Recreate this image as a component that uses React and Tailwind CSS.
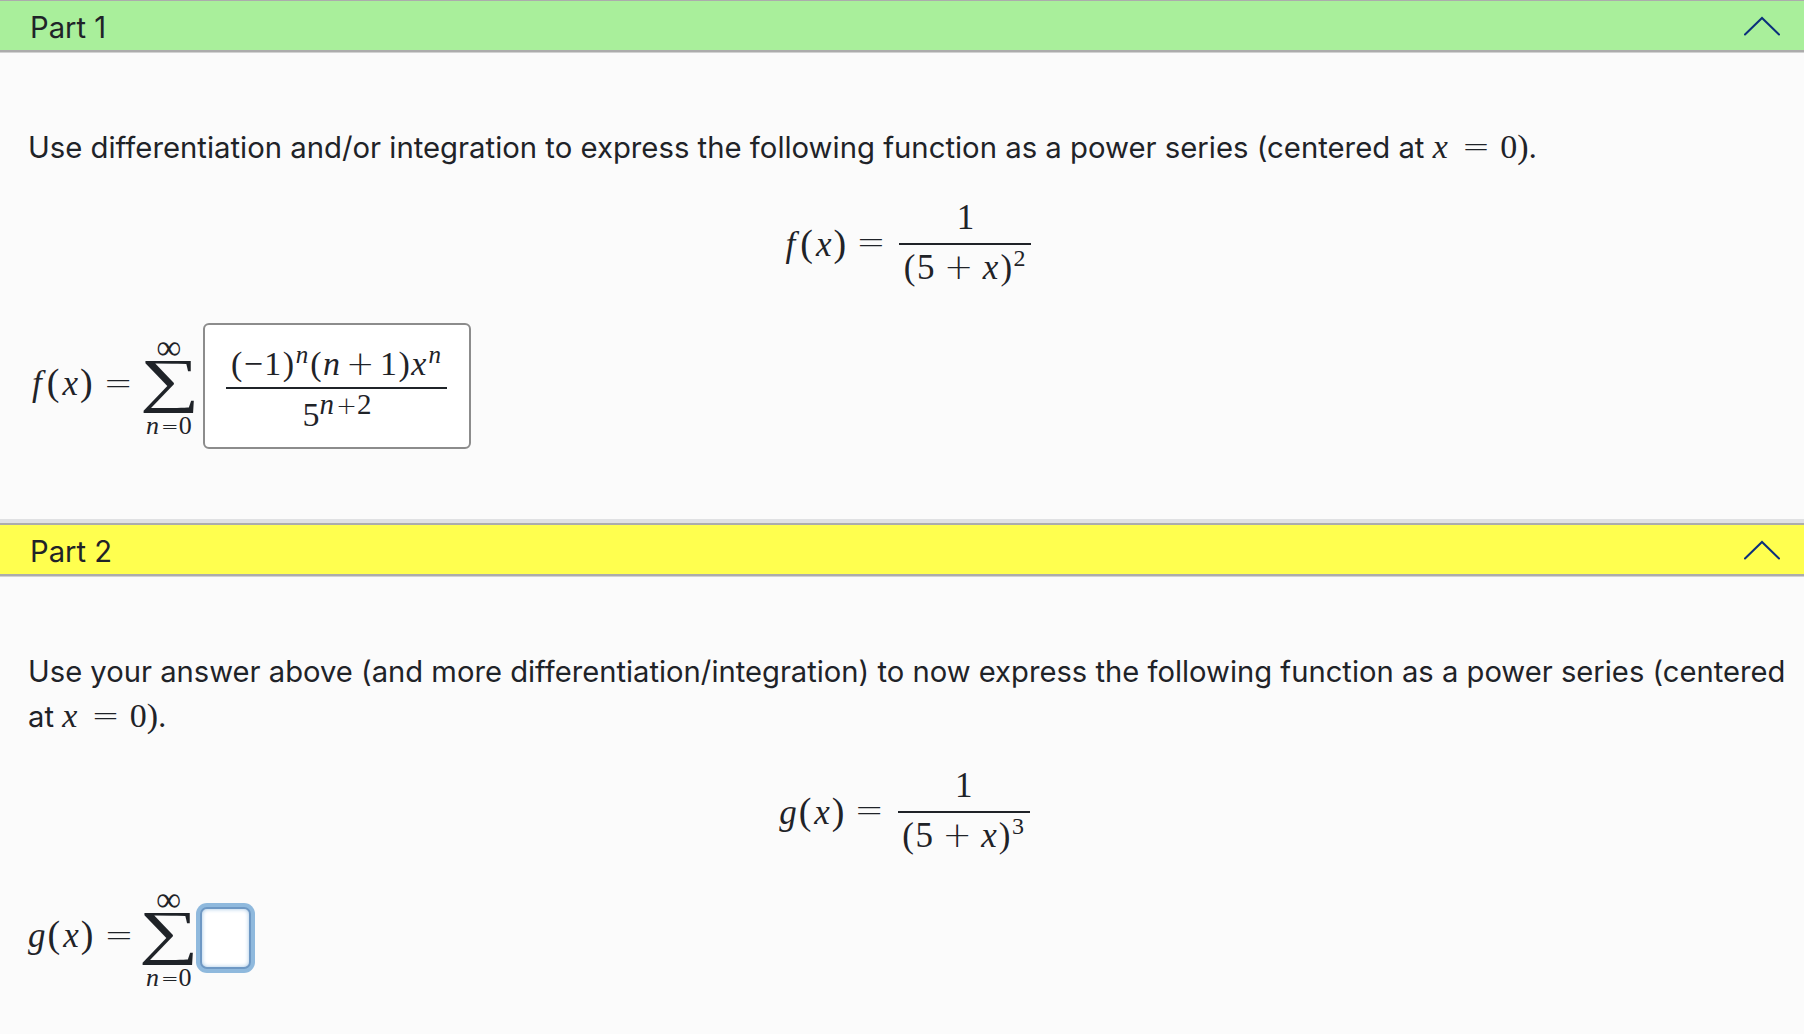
import React from "react";

const serif = "font-['Liberation_Serif',serif] text-[#1f2328]";
const Op = ({ children, className = "" }) => (
  <span className={`font-['DejaVu_Sans',sans-serif] font-extralight ${className}`}>{children}</span>
);
const P = ({ children }) => <span className="text-[38px] leading-none">{children}</span>;

function Chevron() {
  return (
    <svg width="38" height="22" viewBox="0 0 38 22" fill="none" className="text-[#0b2f7c]">
      <path d="M2 19.5 L19 3 L36 19.5" stroke="currentColor" strokeWidth="2" strokeLinecap="round" strokeLinejoin="miter" />
    </svg>
  );
}

function Header({ title, color, outer, lift }) {
  return (
    <div className={`${outer} box-content border-b-2 border-b-[#acacac] ${color} h-[49px] flex items-center justify-between pl-[30px] pr-[23px]`}>
      <span className={`${lift} text-[29.2px] leading-[44px] text-[#1f2328] font-['Inter',sans-serif]`}>{title}</span>
      <Chevron />
    </div>
  );
}

const I = ({ children, className = "" }) => <i className={`tracking-[2px] ${className}`}>{children}</i>;
const Name = ({ n }) => <I className={n === "f" ? "ml-[4px] mr-[3px]" : ""}>{n}</I>;
const Sup = ({ children, className = "text-[24px] align-[13px]" }) => <span className={className}>{children}</span>;

function Frac({ num, den, w, denClass }) {
  return (
    <span className={`inline-flex flex-col items-center ${w}`}>
      <span className="h-[52px] flex items-center justify-center whitespace-nowrap">{num}</span>
      <span className="h-[2px] w-full bg-[#1f2328]" />
      <span className={`h-[52px] ${denClass} flex items-center justify-center whitespace-nowrap`}>{den}</span>
    </span>
  );
}

function DisplayFormula({ name, power, mt }) {
  return (
    <div className={`${mt} flex justify-center items-center ${serif} text-[35px] leading-none`}>
      <span className="whitespace-nowrap tracking-[2px] pb-[3px]"><Name n={name} /><P>(</P><I className="ml-[1px]">x</I><P>)</P></span>
      <Op className="ml-[8px] mr-[14px] pb-[3px]">=</Op>
      <Frac
        w="w-[132px]"
        denClass="pb-[11px]"
        num={<span>1</span>}
        den={<span className="tracking-[1.5px]">(5<Op className="mx-[8px]">+</Op><I>x</I>)<Sup>{power}</Sup></span>}
      />
    </div>
  );
}

function Sum() {
  return (
    <span className="w-[50px] h-[112px] pt-[14px] flex flex-col items-center justify-start">
      <span className="text-[35px] leading-[8px] h-[8px]">∞</span>
      <span className="text-[60px] leading-[56px] h-[61px] scale-x-[1.4]">∑</span>
      <span className="text-[26px] leading-[26px] h-[26px] whitespace-nowrap"><I>n</I><Op className="text-[21px]">=</Op>0</span>
    </span>
  );
}

function Lhs({ name, mr }) {
  return (
    <span className={`whitespace-nowrap text-[35px] tracking-[2px] ${mr} pb-[4px]`}>
      <Name n={name} /><P>(</P><I className="ml-[1px]">x</I><P>)</P><Op className="ml-[9px]">=</Op>
    </span>
  );
}

function Body({ children, size }) {
  return <p className={`whitespace-nowrap ${size} leading-[45px] text-[#1f2328] font-['Inter',sans-serif]`}>{children}</p>;
}

const MathX = () => (
  <span className={`${serif} text-[34px] leading-none`}><I>x</I><Op className="ml-[12px] mr-[10px]">=</Op>0)</span>
);

export default function App() {
  return (
    <div className="w-[1804px] h-[1034px] overflow-hidden bg-[#fbfbfb] font-['Inter',sans-serif]">
      <Header title="Part 1" lift="pt-[5px]" color="bg-[#a9ef9b]" outer="border-t border-t-[#acacac] shadow-[0_1px_0_#d2d2d2]" />
      <div className="pl-[28px] pr-[19px] pt-[73px] pb-[74px]">
        <Body size="text-[29.3px]">Use differentiation and/or integration to express the following function as a power series (centered at <MathX />.</Body>
        <DisplayFormula name="f" power="2" mt="mt-[21px]" />
        <div className={`mt-[26px] flex items-center h-[126px] ${serif}`}>
          <Lhs name="f" mr="mr-[9px]" />
          <Sum />
          <div className="ml-[9px] w-[268px] h-[126px] pt-[4px] rounded-[6px] border-2 border-[#8c8c8c] bg-white flex items-center justify-center text-[34px] leading-none">
            <Frac
              w="w-[221px]"
              denClass="pb-[8px]"
              num={<span className="tracking-[1.5px]"><span>(−1)</span><Sup className="text-[25px] align-[12px]"><I>n</I></Sup><span>(<I>n</I><Op className="mx-[4px]">+</Op>1)</span><I>x</I><Sup className="text-[25px] align-[12px]"><I>n</I></Sup></span>}
              den={<span>5<Sup className="text-[29px] align-[12px]"><I>n</I><Op className="text-[25px]">+</Op>2</Sup></span>}
            />
          </div>
        </div>
      </div>
      <Header title="Part 2" lift="pt-[5px]" color="bg-[#ffff4f]" outer="border-t-[2px] border-t-[#acacac] shadow-[0_-4px_0_#e0e1e3,0_1px_0_#d2d2d2]" />
      <div className="pl-[28px] pr-[19px] pt-[73px]">
        <Body size="text-[29.2px]">Use your answer above (and more differentiation/integration) to now express the following function as a power series (centered<br />at <MathX />.</Body>
        <DisplayFormula name="g" power="3" mt="mt-[20px] pr-[4px]" />
        <div className={`mt-[38px] flex items-center h-[69px] ${serif}`}>
          <Lhs name="g" mr="mr-[8px]" />
          <Sum />
          <div className="ml-[6px] w-[51px] h-[62px] rounded-[7px] border-2 border-[#6e98c4] bg-white ring-4 ring-[#8fb9dd] shadow-[inset_0_0_4px_#9fc3e3]" />
        </div>
      </div>
    </div>
  );
}
